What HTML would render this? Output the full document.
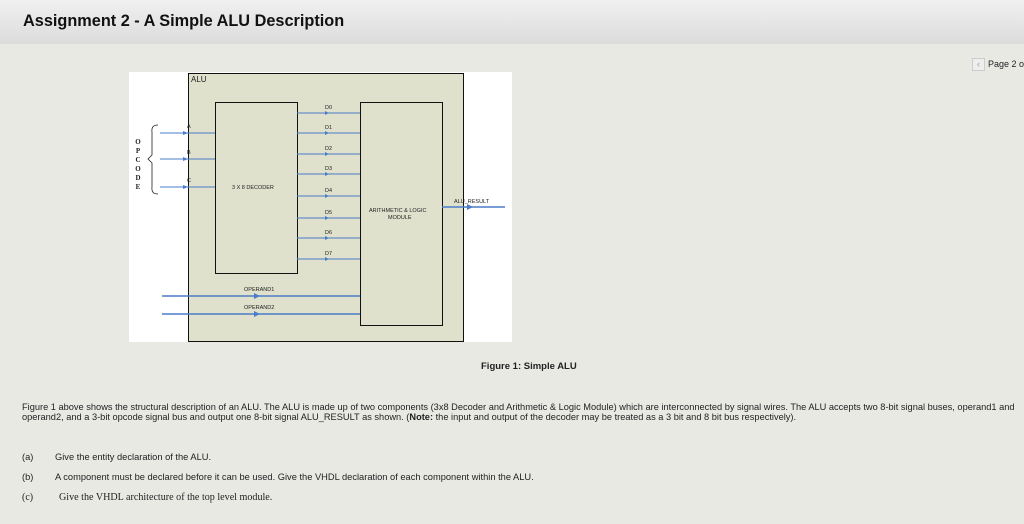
<!DOCTYPE html>
<html><head><style>
body{margin:0;width:1024px;height:524px;background:#e9e9e4;font-family:"Liberation Sans",sans-serif;position:relative;overflow:hidden}
.hdr{position:absolute;left:0;top:0;width:1024px;height:44px;background:linear-gradient(#f0f0f0,#dcdcdc)}
.hdr h1{position:absolute;left:23px;top:12px;margin:0;font-size:16.3px;font-weight:bold;color:#111}
.pg{position:absolute;left:972px;top:58px;font-size:9px;color:#222;white-space:nowrap}
.pg span{display:inline-block;width:11px;height:11px;border:1px solid #ccc;background:#eee;color:#999;text-align:center;line-height:11px;margin-right:3px}
.t{position:absolute;font-size:9.3px;color:#222;white-space:nowrap}
</style></head><body>
<div class="hdr"><h1>Assignment 2 - A Simple ALU Description</h1></div>
<div class="pg"><span>&lsaquo;</span>Page 2 of</div>
<svg style="position:absolute;left:0;top:0" width="1024" height="524">
<rect x="129" y="72" width="383" height="270" fill="#fff"/>
<rect x="188.5" y="73.5" width="275" height="268" fill="#dfe1cd" stroke="#111"/>
<text x="191" y="82" font-size="8" fill="#222">ALU</text>
<rect x="215.5" y="102.5" width="82" height="171" fill="#dfe1cd" stroke="#111"/>
<rect x="360.5" y="102.5" width="82" height="223" fill="#dfe1cd" stroke="#111"/>
<g stroke="#4a7cc8" stroke-width="1">
<line x1="297" y1="113" x2="360" y2="113"/><line x1="297" y1="133" x2="360" y2="133"/>
<line x1="297" y1="154" x2="360" y2="154"/><line x1="297" y1="174" x2="360" y2="174"/>
<line x1="297" y1="196" x2="360" y2="196"/><line x1="297" y1="218" x2="360" y2="218"/>
<line x1="297" y1="238" x2="360" y2="238"/><line x1="297" y1="259" x2="360" y2="259"/>
<line x1="160" y1="133" x2="215" y2="133"/><line x1="160" y1="159" x2="215" y2="159"/><line x1="160" y1="187" x2="215" y2="187"/>
<line x1="162" y1="296" x2="360" y2="296" stroke-width="1.5"/><line x1="162" y1="314" x2="360" y2="314" stroke-width="1.5"/>
<line x1="442" y1="207" x2="505" y2="207" stroke-width="1.5"/>
</g>
<g fill="#4a7cc8">
<path d="M325,111l4,2l-4,2z M325,131l4,2l-4,2z M325,152l4,2l-4,2z M325,172l4,2l-4,2z M325,194l4,2l-4,2z M325,216l4,2l-4,2z M325,236l4,2l-4,2z M325,257l4,2l-4,2z"/>
<path d="M183,131l5,2l-5,2z M183,157l5,2l-5,2z M183,185l5,2l-5,2z"/>
<path d="M254,293l6,3l-6,3z M254,311l6,3l-6,3z M467,204l6,3l-6,3z"/>
</g>
<g font-size="5.5" fill="#222">
<text x="325" y="109">D0</text><text x="325" y="129">D1</text><text x="325" y="150">D2</text><text x="325" y="170">D3</text>
<text x="325" y="192">D4</text><text x="325" y="214">D5</text><text x="325" y="234">D6</text><text x="325" y="255">D7</text>
<text x="187" y="128">A</text><text x="187" y="154">B</text><text x="187" y="182">C</text>
<text x="232" y="189">3 X 8 DECODER</text>
<text x="369" y="212">ARITHMETIC &amp; LOGIC</text><text x="388" y="219">MODULE</text>
<text x="244" y="291">OPERAND1</text><text x="244" y="309">OPERAND2</text>
<text x="454" y="203">ALU_RESULT</text>
</g>
<path d="M158,125 Q151,125 152,132 L152,155 L148,159 L152,163 L152,187 Q151,194 158,194" fill="none" stroke="#222" stroke-width="0.8"/>
<g font-family="Liberation Serif" font-weight="bold" font-size="7" fill="#222" text-anchor="middle">
<text x="138" y="144">O</text><text x="138" y="153">P</text><text x="138" y="162">C</text><text x="138" y="171">O</text><text x="138" y="180">D</text><text x="138" y="189">E</text>
</g>
</svg>
<div class="t" style="left:481px;top:361px;font-weight:bold;font-size:9.5px">Figure 1: Simple ALU</div>
<div class="t" style="left:22px;top:402px;line-height:10px;font-size:9.25px">Figure 1 above shows the structural description of an ALU. The ALU is made up of two components (3x8 Decoder and Arithmetic &amp; Logic Module) which are interconnected by signal wires. The ALU accepts two 8-bit signal buses, operand1 and<br>operand2, and a 3-bit opcode signal bus and output one 8-bit signal ALU_RESULT as shown. (<b>Note:</b> the input and output of the decoder may be treated as a 3 bit and 8 bit bus respectively).</div>
<div class="t" style="left:22px;top:452px">(a)</div><div class="t" style="left:55px;top:452px">Give the entity declaration of the ALU.</div>
<div class="t" style="left:22px;top:472px">(b)</div><div class="t" style="left:55px;top:472px">A component must be declared before it can be used. Give the VHDL declaration of each component within the ALU.</div>
<div class="t" style="left:22px;top:492px;font-family:'Liberation Serif';font-size:10px">(c)</div><div class="t" style="left:59px;top:492px;font-family:'Liberation Serif';font-size:10.1px">Give the VHDL architecture of the top level module.</div>
</body></html>
